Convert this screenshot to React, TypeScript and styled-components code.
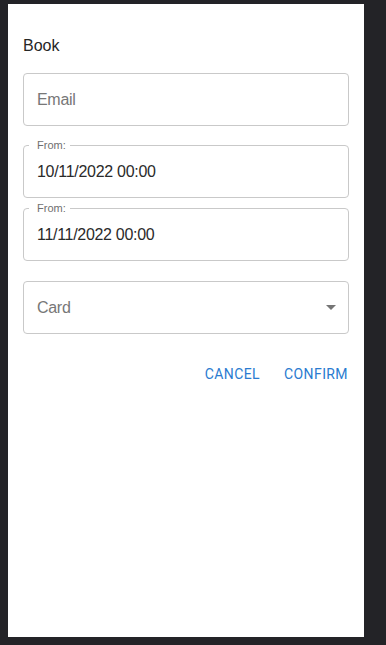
import React from "react"
import styled, { createGlobalStyle } from "styled-components"

const GlobalStyle = createGlobalStyle`
html, body {
  margin: 0;
  padding: 0;
  background: #232327;
}
body {
  font-family: "Liberation Sans", Arial, sans-serif;
}
`

const Screen = styled.div`
display: flex;
align-items: flex-start;
width: 386px;
height: 645px;
padding: 4px 22px 8px 8px;
box-sizing: border-box;
`

const Panel = styled.div`
display: flex;
flex-direction: column;
width: 356px;
height: 633px;
background: #ffffff;
box-sizing: border-box;
padding-top: 30px;
`

const Body = styled.div`
display: flex;
flex-direction: column;
padding: 0 15px;
`

const Title = styled.h2`
margin: 0 0 15px;
font-size: 16px;
font-weight: 400;
line-height: 24px;
color: #262626;
`

const Field = styled.div<{ $gap?: number }>`
position: relative;
display: flex;
align-items: center;
height: 53px;
margin-top: ${p => p.$gap ?? 0}px;
padding: 0 13px;
border: 1px solid #c9c9c9;
border-radius: 4px;
box-sizing: border-box;
`

const Notch = styled.span`
position: absolute;
top: -7px;
left: 5px;
padding: 0 4px 0 8px;
background: #ffffff;
font-size: 11px;
line-height: 13px;
color: #6f6f6f;
`

const Value = styled.span<{ $muted?: boolean }>`
flex: 1;
font-size: 16px;
letter-spacing: -0.3px;
color: ${p => (p.$muted ? "#777777" : "#2a2a2a")};
`

const Caret = styled.span`
width: 0;
height: 0;
margin-right: -1px;
border-left: 5px solid transparent;
border-right: 5px solid transparent;
border-top: 5px solid #757575;
`

const Actions = styled.div`
display: flex;
justify-content: flex-end;
gap: 8px;
padding: 22px 8px 8px;
`

const TextButton = styled.button`
padding: 6px 8px;
border: none;
background: transparent;
font-family: "Roboto", "Liberation Sans", sans-serif;
font-size: 14px;
font-weight: 400;
line-height: 24px;
letter-spacing: 0.4px;
text-transform: uppercase;
color: #2a7bd0;
cursor: pointer;
`

export default function App() {
  return (
    <>
      <GlobalStyle />
      <Screen>
        <Panel>
          <Body>
            <Title>Book</Title>
            <Field>
              <Value $muted>Email</Value>
            </Field>
            <Field $gap={19}>
              <Notch>From:</Notch>
              <Value>10/11/2022 00:00</Value>
            </Field>
            <Field $gap={10}>
              <Notch>From:</Notch>
              <Value>11/11/2022 00:00</Value>
            </Field>
            <Field $gap={20}>
              <Value $muted>Card</Value>
              <Caret />
            </Field>
          </Body>
          <Actions>
            <TextButton>Cancel</TextButton>
            <TextButton>Confirm</TextButton>
          </Actions>
        </Panel>
      </Screen>
    </>
  )
}
